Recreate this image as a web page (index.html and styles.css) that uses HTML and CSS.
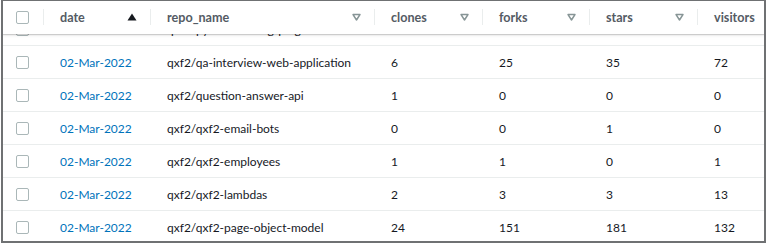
FILE: index.html
```html
<!DOCTYPE html>
<html lang="en">
<head>
    <meta charset="UTF-8">
    <title>Repo stats</title>
    <link rel="stylesheet" href="styles.css">
</head>
<body>
    <div class="frame">
        <div class="table-head">
            <div class="cell cb"><span class="box"></span></div>
            <div class="cell th">date
                <svg class="sort" width="10" height="8" viewBox="0 0 10 8"><path d="M5 0.5 L9.5 7.5 L0.5 7.5 Z" fill="#16191f"/></svg>
            </div>
            <div class="cell th">repo_name
                <svg class="filter" width="9" height="8" viewBox="0 0 9 8"><path d="M1 1.5 L8 1.5 L4.5 7 Z" fill="none" stroke="#879596" stroke-width="1.4" stroke-linejoin="round"/></svg>
            </div>
            <div class="cell th">clones
                <svg class="filter" width="9" height="8" viewBox="0 0 9 8"><path d="M1 1.5 L8 1.5 L4.5 7 Z" fill="none" stroke="#879596" stroke-width="1.4" stroke-linejoin="round"/></svg>
            </div>
            <div class="cell th">forks
                <svg class="filter" width="9" height="8" viewBox="0 0 9 8"><path d="M1 1.5 L8 1.5 L4.5 7 Z" fill="none" stroke="#879596" stroke-width="1.4" stroke-linejoin="round"/></svg>
            </div>
            <div class="cell th">stars
                <svg class="filter" width="9" height="8" viewBox="0 0 9 8"><path d="M1 1.5 L8 1.5 L4.5 7 Z" fill="none" stroke="#879596" stroke-width="1.4" stroke-linejoin="round"/></svg>
            </div>
            <div class="cell th last">visitors</div>
        </div>
        <div class="table-body">
            <!-- row scrolled mostly out of view under the header -->
            <div class="row partial">
                <div class="cell cb"><span class="box"></span></div>
                <div class="cell"><a href="#">02-Mar-2022</a></div>
                <div class="cell">qxf2/python-testing-plugin</div>
                <div class="cell">3</div>
                <div class="cell">0</div>
                <div class="cell">9</div>
                <div class="cell">9</div>
            </div>
            <div class="row">
                <div class="cell cb"><span class="box"></span></div>
                <div class="cell"><a href="#">02-Mar-2022</a></div>
                <div class="cell">qxf2/qa-interview-web-application</div>
                <div class="cell">6</div>
                <div class="cell">25</div>
                <div class="cell">35</div>
                <div class="cell">72</div>
            </div>
            <div class="row">
                <div class="cell cb"><span class="box"></span></div>
                <div class="cell"><a href="#">02-Mar-2022</a></div>
                <div class="cell">qxf2/question-answer-api</div>
                <div class="cell">1</div>
                <div class="cell">0</div>
                <div class="cell">0</div>
                <div class="cell">0</div>
            </div>
            <div class="row">
                <div class="cell cb"><span class="box"></span></div>
                <div class="cell"><a href="#">02-Mar-2022</a></div>
                <div class="cell">qxf2/qxf2-email-bots</div>
                <div class="cell">0</div>
                <div class="cell">0</div>
                <div class="cell">1</div>
                <div class="cell">0</div>
            </div>
            <div class="row">
                <div class="cell cb"><span class="box"></span></div>
                <div class="cell"><a href="#">02-Mar-2022</a></div>
                <div class="cell">qxf2/qxf2-employees</div>
                <div class="cell">1</div>
                <div class="cell">1</div>
                <div class="cell">0</div>
                <div class="cell">1</div>
            </div>
            <div class="row">
                <div class="cell cb"><span class="box"></span></div>
                <div class="cell"><a href="#">02-Mar-2022</a></div>
                <div class="cell">qxf2/qxf2-lambdas</div>
                <div class="cell">2</div>
                <div class="cell">3</div>
                <div class="cell">3</div>
                <div class="cell">13</div>
            </div>
            <div class="row">
                <div class="cell cb"><span class="box"></span></div>
                <div class="cell"><a href="#">02-Mar-2022</a></div>
                <div class="cell">qxf2/qxf2-page-object-model</div>
                <div class="cell">24</div>
                <div class="cell">151</div>
                <div class="cell">181</div>
                <div class="cell">132</div>
            </div>
        </div>
    </div>
</body>
</html>
```

FILE: styles.css
```css
body {
    margin: 0;
    padding: 0 2px 0 1px;
    background: #ffffff;
    font-family: 'Lato', 'Open Sans', sans-serif;
    font-size: 12px;
    color: #16191f;
}
.frame {
    border: 2px solid #6f7173;
    border-top-width: 1px;
    height: 243px;
    box-sizing: border-box;
    overflow: hidden;
    background: #ffffff;
}
.table-head, .row {
    display: grid;
    grid-template-columns: 40px 107px 224px 108px 107px 108px 1fr;
}
.table-head {
    height: 33px;
    position: relative;
    z-index: 1;
    background: #ffffff;
    box-shadow: 0 1px 1px rgba(0, 0, 0, 0.16), 0 2px 3px rgba(0, 0, 0, 0.06);
}
.cell {
    display: flex;
    align-items: center;
    padding-left: 17px;
    white-space: nowrap;
}
.cb {
    padding-left: 13px;
}
.th {
    position: relative;
    font-size: 12.6px;
    font-weight: bold;
    color: #545b64;
    padding-right: 13px;
    justify-content: space-between;
    padding-bottom: 1px;
}
.th::before {
    content: '';
    position: absolute;
    left: 0;
    top: 8px;
    height: 16px;
    border-left: 1px solid #eaeded;
}
.th.last {
    justify-content: flex-start;
}
.box {
    display: block;
    width: 11px;
    height: 11px;
    border: 1px solid #aab7b8;
    border-radius: 2px;
    background: #ffffff;
}
.table-body {
    height: 209px;
    overflow: hidden;
}
.row {
    height: 33px;
    border-top: 1px solid #eaeded;
    box-sizing: border-box;
}
.row.partial {
    margin-top: -22px;
}
.row a {
    color: #0073bb;
    text-decoration: none;
}
```
